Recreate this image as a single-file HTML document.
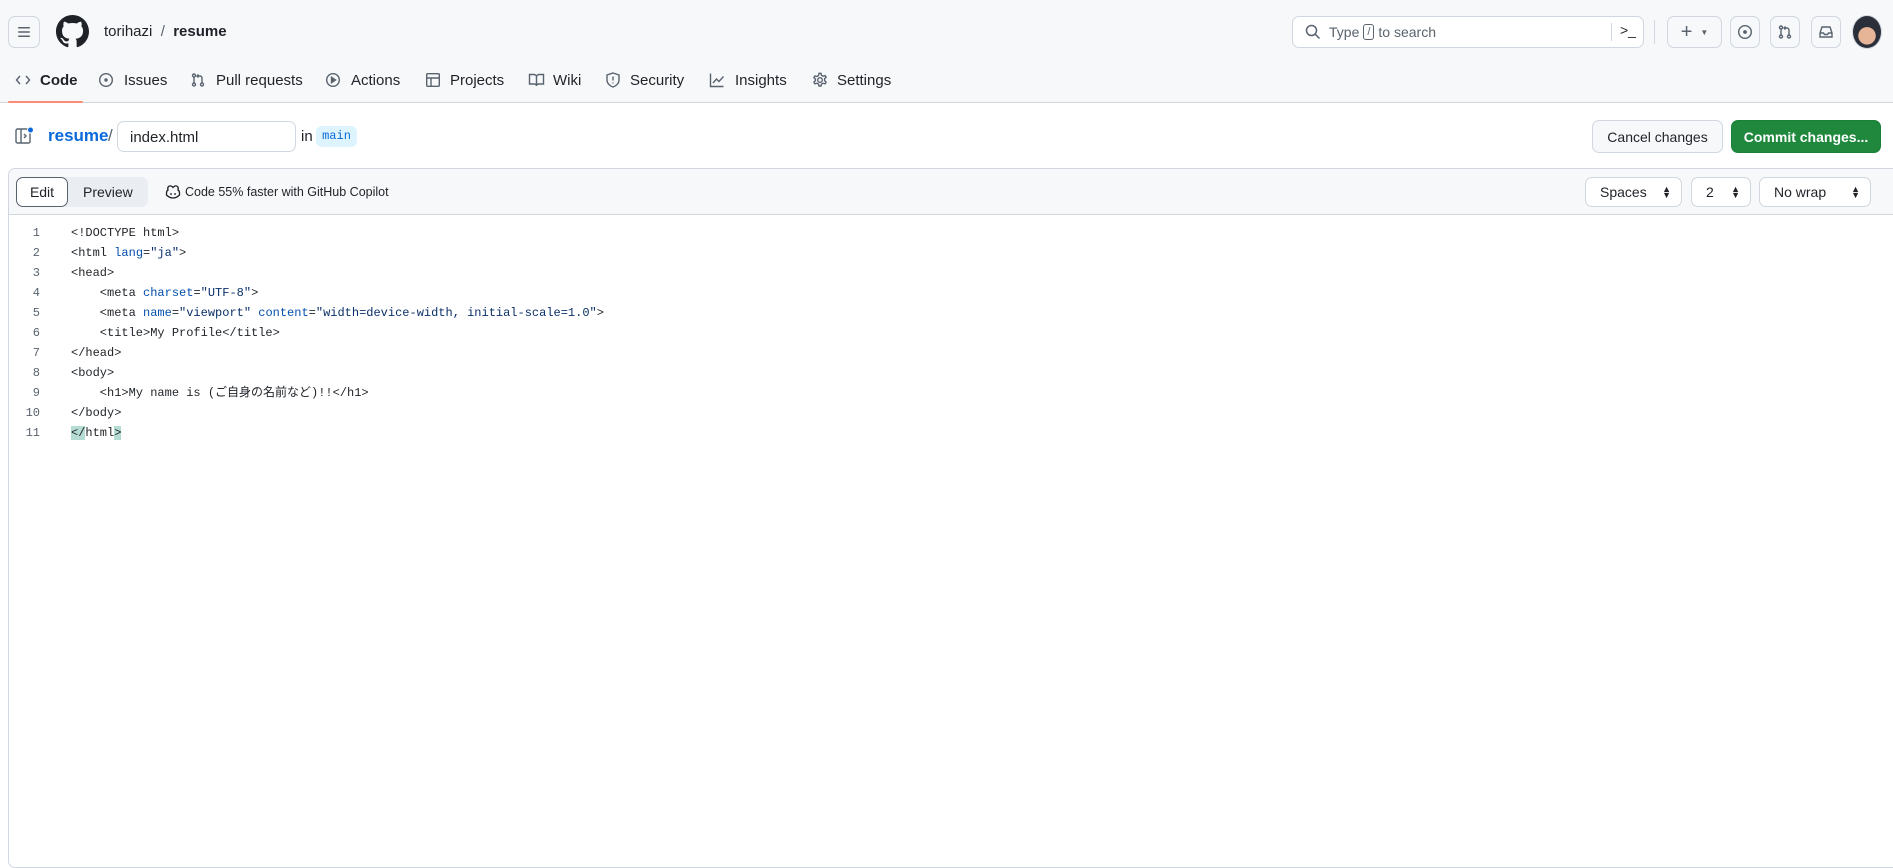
<!DOCTYPE html>
<html><head><meta charset="utf-8"><style>
*{box-sizing:border-box;margin:0;padding:0}
body{width:1893px;height:849px;overflow:hidden;background:#fff;font-family:"Liberation Sans",Arial,sans-serif;color:#1f2328;position:relative;font-size:17px}
.a{position:absolute}
.hdr{left:0;top:0;width:1893px;height:103px;background:#f6f8fa;border-bottom:1px solid #d0d7de}
.btn{position:absolute;border:1px solid #d0d7de;border-radius:7px;background:#f6f8fa;display:flex;align-items:center;justify-content:center}
svg{display:block}
.nav{position:absolute;top:70px;font-size:15px;color:#1f2328;display:flex;align-items:center;height:20px}
.ic{position:absolute;top:72px}
.code{font-family:"Liberation Mono","Noto Sans CJK JP",monospace;font-size:12px;color:#1f2328}
.ln,.cl{height:20px;line-height:20px;overflow:visible}
.ln{position:absolute;left:14px;width:26px;text-align:right;color:#59636e}
.cl{position:absolute;left:71px;white-space:pre}
.at{color:#0550ae}.st{color:#0a3069}
.sel{position:absolute;top:177px;height:30px;border:1px solid #d0d7de;border-radius:7px;background:#fff;font-size:14px;display:flex;align-items:center;padding-left:14px}
.arr{position:absolute;right:10px;top:8px;font-size:9px;line-height:6px;color:#1f2328}
</style></head><body>
<div class="a hdr"></div>
<div class="btn" style="left:8px;top:16px;width:32px;height:32px"><svg width="16" height="16" viewBox="0 0 16 16" fill="#59636e"><rect x="2" y="3" width="12" height="1.5" rx=".7"/><rect x="2" y="7.25" width="12" height="1.5" rx=".7"/><rect x="2" y="11.5" width="12" height="1.5" rx=".7"/></svg></div>
<svg class="a" style="left:56px;top:15px" width="33" height="33" viewBox="0 0 16 16"><path fill="#1f2328" d="M8 0C3.58 0 0 3.58 0 8c0 3.54 2.290 6.53 5.47 7.59.4.07.55-.17.55-.38 0-.19-.01-.82-.01-1.49-2.01.37-2.53-.49-2.69-.94-.09-.23-.48-.94-.82-1.130-.28-.15-.68-.52-.01-.53.63-.01 1.08.58 1.23.82.72 1.21 1.87.87 2.33.66.07-.52.28-.87.51-1.07-1.78-.2-3.64-.89-3.64-3.95 0-.87.31-1.59.82-2.15-.08-.2-.36-1.02.08-2.12 0 0 .67-.21 2.2.82.64-.18 1.32-.27 2-.27.68 0 1.36.09 2 .27 1.53-1.04 2.2-.82 2.2-.82.44 1.1.16 1.92.08 2.12.51.56.82 1.27.82 2.15 0 3.07-1.87 3.75-3.65 3.95.29.25.54.73.54 1.48 0 1.07-.01 1.93-.01 2.2 0 .21.15.46.55.38A8.013 8.013 0 0016 8c0-4.420-3.58-8-8-8z"/></svg>
<div class="a" style="left:104px;top:23px;font-size:15px">torihazi&nbsp;&nbsp;<span style="color:#59636e">/</span>&nbsp;&nbsp;<b style="font-weight:600">resume</b></div>
<div class="btn" style="left:1292px;top:16px;width:352px;height:32px;background:#fff;justify-content:flex-start;padding-left:12px;font-size:14px;color:#59636e">
<svg width="16" height="16" viewBox="0 0 16 16" fill="none" stroke="#59636e" stroke-width="1.5"><circle cx="6.5" cy="6.5" r="5"/><path d="M10.2 10.2L14.5 14.5"/></svg>
<span style="margin-left:8px">Type</span><span style="border:1px solid #59636e;border-radius:3px;font-size:11px;padding:0 3px;margin:0 4px;line-height:14px">/</span><span>to search</span>
<span style="position:absolute;left:318px;top:6px;width:1px;height:18px;background:#d0d7de"></span>
<span style="position:absolute;left:327px;top:5px;font-size:14px;color:#1f2328">&gt;_</span></div>
<div class="a" style="left:1654px;top:20px;width:1px;height:24px;background:#d0d7de"></div>
<div class="btn" style="left:1667px;top:16px;width:55px;height:32px;background:#f6f8fa"><span style="font-size:20px;color:#59636e">+</span><span style="font-size:8px;color:#59636e;margin-left:8px">▼</span></div>
<div class="btn" style="left:1730px;top:16px;width:30px;height:32px"><svg width="16" height="16" viewBox="0 0 16 16" fill="none" stroke="#59636e" stroke-width="1.4"><circle cx="8" cy="8" r="6.3"/><circle cx="8" cy="8" r="1.2" fill="#59636e"/></svg></div>
<div class="btn" style="left:1770px;top:16px;width:30px;height:32px"><svg width="16" height="16" viewBox="0 0 16 16" fill="none" stroke="#59636e" stroke-width="1.4"><circle cx="4" cy="3.5" r="1.5"/><circle cx="4" cy="12.5" r="1.5"/><circle cx="12" cy="12.5" r="1.5"/><path d="M4 5v6M12 11V6a2 2 0 00-2-2H7M8.5 2.5L7 4l1.5 1.5"/></svg></div>
<div class="btn" style="left:1811px;top:16px;width:30px;height:32px"><svg width="16" height="16" viewBox="0 0 16 16" fill="none" stroke="#59636e" stroke-width="1.4"><path d="M2 9l2-6h8l2 6v4H2zM2 9h3.5l1 1.5h3l1-1.5H14"/></svg></div>
<div class="a" style="left:1852px;top:15px;width:30px;height:34px;border-radius:50%;background:radial-gradient(circle at 50% 62%,#e6b598 0 35%,#2b2f3a 37%);border:1px solid #d0d7de"></div>

<svg class="ic" style="left:14px" width="18" height="16" viewBox="0 0 16 16" fill="none" stroke="#59636e" stroke-width="1.4"><path d="M5 4L1.5 8 5 12M11 4l3.5 4-3.5 4"/></svg>
<div class="nav" style="left:40px;font-weight:600">Code</div>
<div class="a" style="left:8px;top:101px;width:75px;height:2px;background:#fd8c73;border-radius:2px"></div>
<svg class="ic" style="left:98px" width="16" height="16" viewBox="0 0 16 16" fill="none" stroke="#59636e" stroke-width="1.4"><circle cx="8" cy="8" r="6.3"/><circle cx="8" cy="8" r="1" fill="#59636e"/></svg>
<div class="nav" style="left:124px">Issues</div>
<svg class="ic" style="left:190px" width="16" height="16" viewBox="0 0 16 16" fill="none" stroke="#59636e" stroke-width="1.4"><circle cx="4" cy="3.5" r="1.5"/><circle cx="4" cy="12.5" r="1.5"/><circle cx="12" cy="12.5" r="1.5"/><path d="M4 5v6M12 11V6a2 2 0 00-2-2H7M8.5 2.5L7 4l1.5 1.5"/></svg>
<div class="nav" style="left:216px">Pull requests</div>
<svg class="ic" style="left:325px" width="16" height="16" viewBox="0 0 16 16" fill="none" stroke="#59636e" stroke-width="1.4"><circle cx="8" cy="8" r="6.3"/><path d="M6.5 5.3v5.4L10.5 8z" fill="#59636e"/></svg>
<div class="nav" style="left:351px">Actions</div>
<svg class="ic" style="left:425px" width="16" height="16" viewBox="0 0 16 16" fill="none" stroke="#59636e" stroke-width="1.4"><rect x="1.7" y="1.7" width="12.6" height="12.6" rx="1"/><path d="M1.7 6h12.6M6 6v8.3"/></svg>
<div class="nav" style="left:450px">Projects</div>
<svg class="ic" style="left:528px" width="17" height="16" viewBox="0 0 16 16" fill="none" stroke="#59636e" stroke-width="1.4"><path d="M1 2.5h4.5A2.5 2.5 0 018 5v9a2 2 0 00-2-2H1zM15 2.5h-4.5A2.5 2.5 0 008 5v9a2 2 0 012-2h5z"/></svg>
<div class="nav" style="left:553px">Wiki</div>
<svg class="ic" style="left:605px" width="16" height="16" viewBox="0 0 16 16" fill="none" stroke="#59636e" stroke-width="1.4"><path d="M8 1l6 2v5c0 3.5-3 6-6 7-3-1-6-3.5-6-7V3z"/><path d="M8 4.5v4M8 10.5v1"/></svg>
<div class="nav" style="left:630px">Security</div>
<svg class="ic" style="left:709px" width="16" height="16" viewBox="0 0 16 16" fill="none" stroke="#59636e" stroke-width="1.4"><path d="M1.5 1.5v13h13M4 11l3.5-4 2.5 2.5 4.5-5"/></svg>
<div class="nav" style="left:735px">Insights</div>
<svg class="ic" style="left:812px" width="16" height="16" viewBox="0 0 16 16" fill="none" stroke="#59636e" stroke-width="1.4"><circle cx="8" cy="8" r="2.3"/><path d="M7 1.3h2l.5 2 1.6.9 2-.6 1 1.7-1.5 1.5v1.8l1.5 1.5-1 1.7-2-.6-1.6.9-.5 2H7l-.5-2-1.6-.9-2 .6-1-1.7 1.5-1.5V7.1L1.9 5.6l1-1.7 2 .6 1.6-.9z"/></svg>
<div class="nav" style="left:837px">Settings</div>

<svg class="a" style="left:15px;top:127px" width="20" height="18" viewBox="0 0 20 18" fill="none" stroke="#59636e" stroke-width="1.4"><rect x="1" y="2" width="14" height="14" rx="1.5"/><path d="M6 2v14M9 7l2 2-2 2"/><circle cx="15.5" cy="3" r="3" fill="#0969da" stroke="#fff" stroke-width="1"/></svg>
<div class="a" style="left:48px;top:126px;font-size:17px;color:#0969da;font-weight:600">resume</div>
<div class="a" style="left:108px;top:126px;font-size:17px;color:#59636e">/</div>
<div class="a" style="left:117px;top:121px;width:179px;height:31px;border:1px solid #d0d7de;border-radius:7px;background:#fff;font-size:15px;padding:7px 0 0 12px">index.html</div>
<div class="a" style="left:301px;top:128px;font-size:15px">in</div>
<div class="a code" style="left:316px;top:126px;width:41px;height:21px;background:#ddf4ff;border-radius:6px;color:#0969da;font-size:12px;text-align:center;line-height:21px">main</div>
<div class="btn" style="left:1592px;top:120px;width:131px;height:33px;font-size:14px;font-weight:500">Cancel changes</div>
<div class="btn" style="left:1731px;top:120px;width:150px;height:33px;font-size:14px;font-weight:600;background:#1f883d;border-color:#1a7f37;color:#fff">Commit changes...</div>

<div class="a" style="left:8px;top:168px;width:1900px;height:700px;border:1px solid #d0d7de;border-radius:7px"></div>
<div class="a" style="left:9px;top:169px;width:1884px;height:46px;background:#f6f8fa;border-bottom:1px solid #d0d7de;border-top-left-radius:6px"></div>
<div class="a" style="left:16px;top:177px;width:132px;height:30px;background:#eaeef2;border-radius:7px"></div>
<div class="a" style="left:16px;top:177px;width:52px;height:30px;background:#fff;border:1px solid #59636e;border-radius:7px;font-size:14px;text-align:center;line-height:28px">Edit</div>
<div class="a" style="left:83px;top:184px;font-size:14px">Preview</div>
<svg class="a" style="left:165px;top:184px" width="16" height="16" viewBox="0 0 16 16" fill="none" stroke="#1f2328" stroke-width="1.3"><path d="M3 6c-1-3 1-4.5 3-4 1 .3 1.5 1 2 1.5.5-.5 1-1.2 2-1.5 2-.5 4 1 3 4 1 .5 1.5 1.5 1.5 3v2c-2 2-4.5 3-6.5 3S3.5 13 1.5 11V9c0-1.5.5-2.5 1.5-3z"/><path d="M6 9v2M10 9v2"/></svg>
<div class="a" style="left:185px;top:185px;font-size:12.5px;font-weight:500">Code 55% faster with GitHub Copilot</div>
<div class="sel" style="left:1585px;width:97px">Spaces<span class="arr">▲<br>▼</span></div>
<div class="sel" style="left:1691px;width:60px">2<span class="arr">▲<br>▼</span></div>
<div class="sel" style="left:1759px;width:112px">No wrap<span class="arr">▲<br>▼</span></div>

<div class="code">
<div class="ln" style="top:223px">1</div><div class="cl" style="top:223px">&lt;!DOCTYPE html&gt;</div>
<div class="ln" style="top:243px">2</div><div class="cl" style="top:243px">&lt;html <span class="at">lang</span>=<span class="st">"ja"</span>&gt;</div>
<div class="ln" style="top:263px">3</div><div class="cl" style="top:263px">&lt;head&gt;</div>
<div class="ln" style="top:283px">4</div><div class="cl" style="top:283px">    &lt;meta <span class="at">charset</span>=<span class="st">"UTF-8"</span>&gt;</div>
<div class="ln" style="top:303px">5</div><div class="cl" style="top:303px">    &lt;meta <span class="at">name</span>=<span class="st">"viewport"</span> <span class="at">content</span>=<span class="st">"width=device-width, initial-scale=1.0"</span>&gt;</div>
<div class="ln" style="top:323px">6</div><div class="cl" style="top:323px">    &lt;title&gt;My Profile&lt;/title&gt;</div>
<div class="ln" style="top:343px">7</div><div class="cl" style="top:343px">&lt;/head&gt;</div>
<div class="ln" style="top:363px">8</div><div class="cl" style="top:363px">&lt;body&gt;</div>
<div class="ln" style="top:383px">9</div><div class="cl" style="top:383px">    &lt;h1&gt;My name is (ご自身の名前など)!!&lt;/h1&gt;</div>
<div class="ln" style="top:403px">10</div><div class="cl" style="top:403px">&lt;/body&gt;</div>
<div class="ln" style="top:423px">11</div><div class="cl" style="top:423px"><span style="background:#b4dcd3">&lt;/</span>html<span style="background:#b4dcd3">&gt;</span></div>
</div>
</body></html>
